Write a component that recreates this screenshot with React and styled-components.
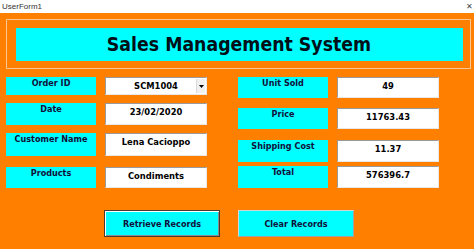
import React from "react";
import styled, { createGlobalStyle } from "styled-components";

const GlobalStyle = createGlobalStyle`
  html, body {
    margin: 0;
    padding: 0;
    background: #ffffff;
  }
  * {
    box-sizing: border-box;
  }
`;

// Data
const leftFields = [
  { label: "Order ID", value: "SCM1004", h: 18, mt: 0, combo: true },
  { label: "Date", value: "23/02/2020", h: 22, mt: 8 },
  { label: "Customer Name", value: "Lena Cacioppo", h: 23, mt: 8 },
  { label: "Products", value: "Condiments", h: 21, mt: 11 },
];

const rightFields = [
  { label: "Unit Sold", value: "49", h: 21, mt: 0 },
  { label: "Price", value: "11763.43", h: 21, mt: 10 },
  { label: "Shipping Cost", value: "11.37", h: 22, mt: 11 },
  { label: "Total", value: "576396.7", h: 22, mt: 4 },
];

const App = () => {
  const renderRow = (f) => (
    <Row key={f.label} $h={f.h} $mt={f.mt}>
      <Label>{f.label}</Label>
      <Value>
        <span>{f.value}</span>
        {f.combo && (
          <DropButton>
            <svg width="5" height="3" viewBox="0 0 5 3">
              <path d="M0 0 H5 L2.5 3 Z" fill="#000" />
            </svg>
          </DropButton>
        )}
      </Value>
    </Row>
  );

  return (
    <>
      <GlobalStyle />
      <Window>
        <TitleBar>
          <span>UserForm1</span>
          <Close>✕</Close>
        </TitleBar>
        <Form>
          <Frame>
            <Heading>Sales Management System</Heading>
          </Frame>
          <Fields>
            <Column>{leftFields.map(renderRow)}</Column>
            <Column>{rightFields.map(renderRow)}</Column>
          </Fields>
          <Buttons>
            <Button $focused>Retrieve Records</Button>
            <Button>Clear Records</Button>
          </Buttons>
        </Form>
      </Window>
    </>
  );
};

const Window = styled.div`
  width: 474px;
  height: 249px;
  display: flex;
  flex-direction: column;
  overflow: hidden;
  font-family: "DejaVu Sans Condensed", "DejaVu Sans", sans-serif;
`;

const TitleBar = styled.div`
  height: 13px;
  flex: 0 0 13px;
  background: #ffffff;
  display: flex;
  align-items: center;
  justify-content: space-between;
  padding: 0 1px 0 2px;
  font-family: "Liberation Sans", Arial, sans-serif;
  font-size: 8px;
  color: #333;
  overflow: hidden;
`;

const Close = styled.span`
  font-size: 8px;
  color: #444;
`;

const Form = styled.div`
  flex: 1;
  background: #ff8000;
  padding: 6px 3px 0 6px;
  display: flex;
  flex-direction: column;
`;

const Frame = styled.div`
  height: 50px;
  border: 1px solid #ffc58f;
  padding: 8px 7px 7px 9px;
`;

const Heading = styled.div`
  height: 100%;
  background: #00ffff;
  display: flex;
  align-items: center;
  justify-content: center;
  font-weight: bold;
  font-size: 19.3px;
  color: #001018;
  padding-right: 1px;
`;

const Fields = styled.div`
  display: flex;
  gap: 31px;
  margin-top: 8px;
`;

const Column = styled.div`
  display: flex;
  flex-direction: column;
`;

const Row = styled.div`
  display: flex;
  gap: 9px;
  height: ${(p) => p.$h}px;
  margin-top: ${(p) => p.$mt}px;
`;

const Label = styled.div`
  width: 90px;
  background: #00ffff;
  color: #10103a;
  font-weight: bold;
  font-size: 9px;
  text-align: center;
  padding-top: 1px;
  line-height: 11px;
`;

const Value = styled.div`
  position: relative;
  width: 102px;
  background: #ffffff;
  border-top: 1px solid #9a9a9a;
  border-left: 1px solid #9a9a9a;
  border-right: 1px solid #e8e8e8;
  border-bottom: 1px solid #e8e8e8;
  color: #000;
  font-weight: bold;
  font-size: 9.3px;
  text-align: center;
  padding-top: 2px;
  line-height: 11px;
`;

const DropButton = styled.div`
  position: absolute;
  top: 1px;
  right: 1px;
  bottom: 1px;
  width: 9px;
  background: #f0f0f0;
  border-left: 1px solid #d8d8d8;
  display: flex;
  align-items: center;
  justify-content: center;
`;

const Buttons = styled.div`
  display: flex;
  gap: 18px;
  margin-top: 22px;
  padding-left: 98px;
`;

const Button = styled.button`
  width: 116px;
  height: 27px;
  background: #00ffff;
  font-family: inherit;
  font-weight: bold;
  font-size: 9px;
  color: #10103a;
  padding: 0;
  border: 1px solid ${(p) => (p.$focused ? "#4a3a30" : "#d6d6d6")};
  box-shadow: ${(p) =>
    p.$focused ? "inset 1px 1px 0 #ffffff, inset -1px -1px 0 #8a8a8a" : "none"};
  border-right-color: ${(p) => (p.$focused ? "#4a3a30" : "#a0a0a0")};
  border-bottom-color: ${(p) => (p.$focused ? "#4a3a30" : "#a0a0a0")};
`;

export default App;
